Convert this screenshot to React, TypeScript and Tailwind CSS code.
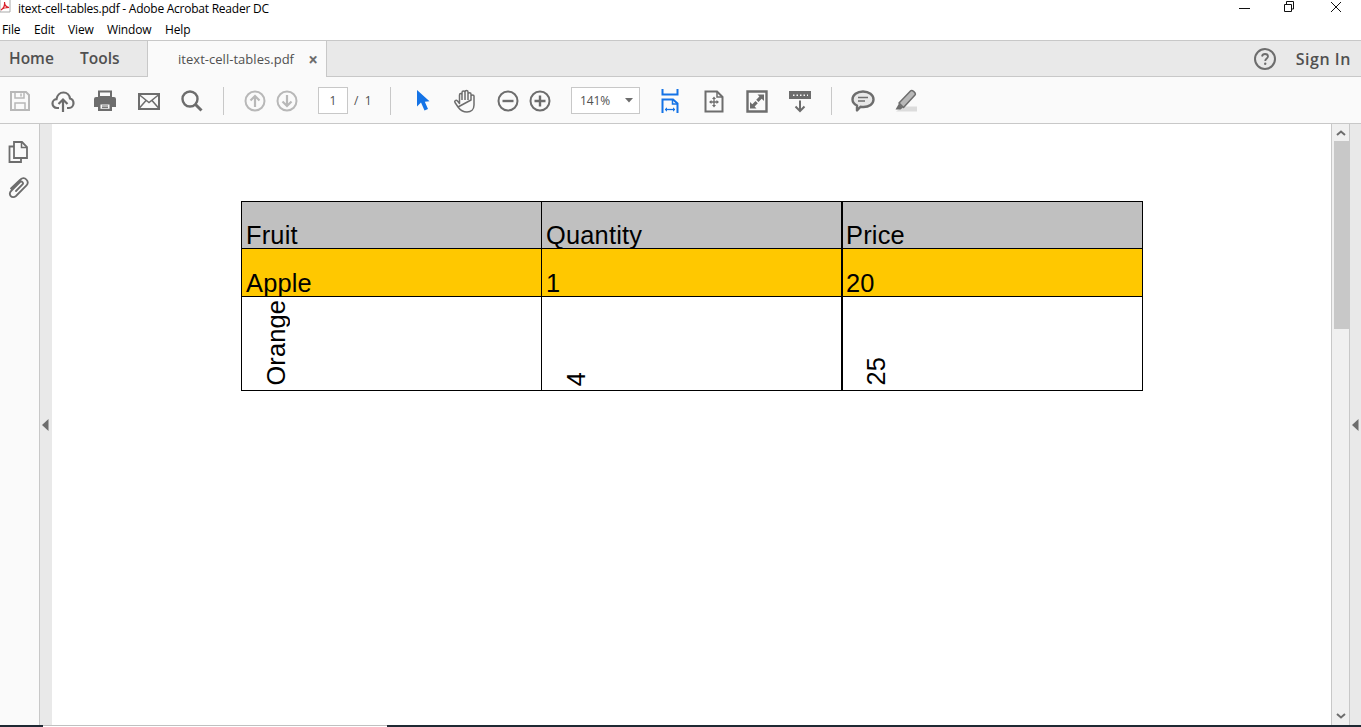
import React from "react";

const G = "#6d6d6d";
const L = "#b8b8b8";
const B = "#1473e6";

function Ic({ w = 24, h = 24, ml, children }: { w?: number; h?: number; ml: string; children: React.ReactNode }) {
  return (
    <svg width={w} height={h} viewBox={`0 0 ${w} ${h}`} fill="none" className={`shrink-0 ${ml}`}>
      {children}
    </svg>
  );
}

function Cell({ text, cls, rotated }: { text: string; cls: string; rotated?: boolean }) {
  if (rotated) {
    return (
      <div className={`flex items-end pb-[4px] ${cls}`}>
        <span className="[writing-mode:vertical-rl] rotate-180 font-['Liberation_Sans',sans-serif] text-[25.4px] leading-[28px] tracking-[0.15px] text-black">{text}</span>
      </div>
    );
  }
  return (
    <div className={`flex items-end ${cls}`}>
      <span className="font-['Liberation_Sans',sans-serif] text-[25.4px] leading-[28px] tracking-[0.2px] translate-y-[1px] text-black">{text}</span>
    </div>
  );
}

export default function App() {
  return (
    <div className="flex h-[727px] w-[1361px] flex-col overflow-hidden bg-white font-['Open_Sans',sans-serif] text-black">
      {/* Title bar */}
      <div className="flex h-[20px] shrink-0 items-center bg-white">
        <svg width="14" height="16" viewBox="0 0 14 16" fill="none" className="mt-[-6px] shrink-0">
          <path d="M0 0H10V13H0Z" fill="#fff" stroke="#a9a9a9" />
          <path d="M1 11C4 9 5 6 4.500 3C4.500 6 6 8 9 8.500C6 8.500 3 9 1 11Z" stroke="#d8202a" strokeWidth="1.200" />
        </svg>
        <span className="ml-[4px] mt-[-3px] text-[12px] leading-[16px] tracking-[-0.24px]">itext-cell-tables.pdf - Adobe Acrobat Reader DC</span>
        <div className="ml-auto flex items-center">
          <svg width="12" height="12" viewBox="0 0 12 12" className="mr-[33px] mt-[-6px]"><path d="M0 7.500H11" stroke="#111" /></svg>
          <svg width="12" height="12" viewBox="0 0 12 12" fill="none" className="mr-[34px] mt-[-6px]"><path d="M0.500 3.500H7.500V10.500H0.500ZM2.500 3.500V0.500H9.500V8H7.500" stroke="#111" /></svg>
          <svg width="12" height="12" viewBox="0 0 12 12" className="mr-[19px] mt-[-6px]"><path d="M1 1L11 11M11 1L1 11" stroke="#111" /></svg>
        </div>
      </div>

      {/* Menu */}
      <div className="flex h-[20px] shrink-0 items-center bg-white pl-[2px] text-[12px] leading-[16px] tracking-[-0.15px]">
        <span className="w-[32px]">File</span>
        <span className="w-[34px]">Edit</span>
        <span className="w-[39px]">View</span>
        <span className="w-[58px]">Window</span>
        <span>Help</span>
      </div>

      {/* Tabs */}
      <div className="flex h-[37px] shrink-0 items-stretch border-y border-[#c8c8c8] bg-[#e9e9e9]">
        <div className="flex w-[147px] items-center pl-[9px] text-[15.500px] font-semibold text-[#505050]">
          <span className="w-[71px]">Home</span>
          <span>Tools</span>
        </div>
        <div className="mb-[-1px] flex w-[180px] items-center border-x border-[#c8c8c8] bg-[#fafafa] pl-[30px] text-[13px] text-[#505050]">
          <span className="translate-y-[1px] tracking-[0.03px]">itext-cell-tables.pdf</span>
          <span className="ml-auto mr-[8px] text-[17px] font-bold leading-none text-[#6d6d6d]">×</span>
        </div>
        <div className="ml-auto flex items-center pr-[10px]">
          <svg width="24" height="24" viewBox="0 0 24 24" fill="none" className="mr-[19px]">
            <circle cx="12" cy="12" r="10" stroke={G} strokeWidth="2" />
            <path d="M9 9.500C9.300 7.800 10.500 7 12 7C13.800 7 15 8 15 9.500C15 11.500 12.200 11.500 12.200 14" stroke={G} strokeWidth="1.800" />
            <circle cx="12.200" cy="16.800" r="1.200" fill={G} />
          </svg>
          <span className="text-[16px] font-semibold tracking-[0.55px] text-[#505050]">Sign In</span>
        </div>
      </div>

      {/* Toolbar */}
      <div className="flex h-[47px] shrink-0 items-center border-b border-[#c8c8c8] bg-[#fafafa] pt-[1px]">
        {/* save */}
        <Ic ml="ml-[8px]">
          <path d="M3 3H18L21 6V21H3Z" stroke={L} strokeWidth="2" />
          <path d="M7 3V9H16V3M13 4.500V7.500M7 21V14H17V21" stroke={L} strokeWidth="1.500" />
        </Ic>
        {/* upload */}
        <Ic ml="ml-[19px]">
          <path d="M8 19H6C3 19 1.500 16.500 1.500 14.500C1.500 12 3.500 10.200 5.500 10.200C6 6.500 8.800 3.500 12.500 3.500C16 3.500 18.500 6.200 19 9.500C21 10 22.500 12 22.500 14.200C22.500 16.800 20.500 19 18 19H16" stroke={G} strokeWidth="2.200" />
          <path d="M12 23V11M7.500 15L12 10.500L16.500 15" stroke={G} strokeWidth="2.200" />
        </Ic>
        {/* print */}
        <Ic ml="ml-[18px]">
          <path d="M6 2.500H18V8H6Z" stroke={G} strokeWidth="2" />
          <path d="M3 8H21A2 2 0 0 1 23 10V18H19V14H5V18H1V10A2 2 0 0 1 3 8Z" fill={G} />
          <path d="M5 13H19V22H5Z" fill={G} />
          <path d="M7.500 15.500H16.500V19.800H7.500Z" fill="#fafafa" />
          <path d="M9 17H15M9 18.600H15" stroke={G} />
        </Ic>
        {/* mail */}
        <Ic ml="ml-[20px]">
          <path d="M2 5H22V20H2Z" stroke={G} strokeWidth="2" />
          <path d="M2 5.500L12 13.500L22 5.500M2 19.500L9 11.500M22 19.500L15 11.500" stroke={G} strokeWidth="1.500" />
        </Ic>
        {/* search */}
        <Ic ml="ml-[19px]">
          <circle cx="10" cy="10" r="7.500" stroke={G} strokeWidth="2.400" />
          <path d="M15.500 15.500L21.500 21.500" stroke={G} strokeWidth="3" />
        </Ic>
        <div className="ml-[19px] h-[28px] w-px bg-[#c8c8c8]" />
        {/* up */}
        <Ic ml="ml-[19px]">
          <circle cx="12" cy="12" r="9.500" stroke={L} strokeWidth="2" />
          <path d="M12 18V7M7.500 11.500L12 7L16.500 11.500" stroke={L} strokeWidth="2.200" />
        </Ic>
        {/* down */}
        <Ic ml="ml-[8px]">
          <circle cx="12" cy="12" r="9.500" stroke={L} strokeWidth="2" />
          <path d="M12 6V17M7.500 12.500L12 17L16.500 12.500" stroke={L} strokeWidth="2.200" />
        </Ic>
        <div className="ml-[19px] flex h-[27px] w-[30px] items-center justify-center border border-[#c8c8c8] bg-white text-[12px] text-[#505050]">1</div>
        <span className="ml-[6px] w-[17px] whitespace-pre text-[12px] text-[#505050]">/  1</span>
        <div className="ml-[19px] h-[28px] w-px bg-[#c8c8c8]" />
        {/* cursor */}
        <Ic ml="ml-[19px]">
          <path d="M7 1V17.500L11 13.500L14.500 21.500L18 20L14.800 12.800L19.500 12.300Z" fill={B} />
        </Ic>
        {/* hand */}
        <Ic ml="ml-[19px]" h={26}>
          <path d="M5 19L2 14.500C1 13 3 11.500 4.500 13L6.500 15.500V7C6.500 5 9 5 9 7V12M9 12V4.500C9 2.500 12 2.500 12 4.500V12M12 12V4C12 2 15 2 15 4V12M15 12V6C15 4.200 18 4.200 18 6V12M18 12V8C18 6.500 21 6.500 21 8V17C21 21.500 18 24 14 24C10 24 7.500 22.500 5 19Z" stroke={G} strokeWidth="1.500" strokeLinejoin="round" />
        </Ic>
        {/* minus */}
        <Ic ml="ml-[19px]">
          <circle cx="12" cy="12" r="9.500" stroke={G} strokeWidth="2" />
          <path d="M6.500 12H17.500" stroke={G} strokeWidth="2.400" />
        </Ic>
        {/* plus */}
        <Ic ml="ml-[8px]">
          <circle cx="12" cy="12" r="9.500" stroke={G} strokeWidth="2" />
          <path d="M6.500 12H17.500M12 6.500V17.500" stroke={G} strokeWidth="2.400" />
        </Ic>
        <div className="ml-[19px] flex h-[27px] w-[69px] items-center border border-[#c8c8c8] bg-white pl-[8px] text-[12px] tracking-[-0.15px] text-[#505050]">
          <span>141%</span>
          <svg width="8" height="5" viewBox="0 0 8 5" className="ml-auto mr-[6px]"><path d="M0 0H8L4 4.500Z" fill={G} /></svg>
        </div>
        {/* fit width */}
        <Ic ml="ml-[18px]" h={26}>
          <path d="M4.500 1V6.500H19.500V1" stroke={B} strokeWidth="2" />
          <path d="M4.500 25V11.500H15L19.500 15.500V25" stroke={B} strokeWidth="2" />
          <path d="M14.500 11.500V16H19.500" stroke={B} strokeWidth="1.500" />
          <path d="M7 21.500H17" stroke={B} strokeWidth="1.300" />
          <path d="M9 19.300L6.800 21.500L9 23.700ZM15 19.300L17.200 21.500L15 23.700Z" fill={B} />
        </Ic>
        {/* fit page */}
        <Ic ml="ml-[20px]">
          <path d="M3.500 2.500H15L20.500 8V22.500H3.500Z" stroke={G} strokeWidth="2" />
          <path d="M15 2.500V8H20.500" stroke={G} strokeWidth="1.500" />
          <path d="M12 9V17M8 13H16" stroke={G} strokeWidth="1.300" />
          <path d="M10 10L12 7.500L14 10ZM10 16L12 18.500L14 16ZM9.500 11L7 13L9.500 15ZM14.500 11L17 13L14.500 15Z" fill={G} />
        </Ic>
        {/* full screen */}
        <Ic ml="ml-[19px]">
          <path d="M2.500 2.500H21.500V22.500H2.500Z" stroke={G} strokeWidth="2.400" />
          <path d="M12.500 5.500H19V12L16.700 9.800L13.500 13L11.200 10.700L14.400 7.500Z" fill={G} />
          <path d="M11.500 19.500H5V13L7.300 15.200L10.500 12L12.800 14.300L9.600 17.500Z" fill={G} />
        </Ic>
        {/* read mode */}
        <Ic ml="ml-[19px]">
          <path d="M1 2H23V10H1Z" fill={G} />
          <path d="M5 5.500H6.500V7H5ZM8.500 5.500H10V7H8.500ZM12 5.500H13.500V7H12ZM15.500 5.500H17V7H15.500ZM19 5.500H20V7H19Z" fill="#fafafa" />
          <path d="M12 11.500V22M7.500 17.500L12 22L16.500 17.500" stroke={G} strokeWidth="2" />
        </Ic>
        <div className="ml-[19px] h-[28px] w-px bg-[#c8c8c8]" />
        {/* comment */}
        <Ic ml="ml-[19px]">
          <path d="M12 2.500C18 2.500 22.500 6 22.500 10.500C22.500 15 18 18 12.500 18C11.500 18 10.500 18 9.500 17.800L6 21.500V16.500C3 15 1.500 13 1.500 10.500C1.500 6 6 2.500 12 2.500Z" stroke={G} strokeWidth="2.400" strokeLinejoin="round" fill="#e8e8e8" />
          <path d="M7 8.500H17M7 12H14" stroke={G} strokeWidth="1.300" />
        </Ic>
        {/* highlight */}
        <Ic ml="ml-[19px]">
          <path d="M2 22.500H23V17.500H9Z" fill="#dcdcdc" />
          <path d="M5 14L16.500 2C18 0.500 22.500 4 21 6L9.500 18.500Z" stroke={G} strokeWidth="1.500" strokeLinejoin="round" fill={L} />
          <path d="M5 14.500L9 18.500L6.500 20.500H1.500Z" fill={G} />
        </Ic>
      </div>

      {/* Main */}
      <div className="flex min-h-0 flex-1">
        <div className="flex w-[40px] shrink-0 flex-col items-center border-r border-[#c8c8c8] bg-[#fafafa] pr-[3px] pt-[16px]">
          <svg width="24" height="24" viewBox="0 0 24 24" fill="none">
            <path d="M8 6.500H3.500V22H15V18" stroke={G} strokeWidth="1.800" />
            <path d="M8 2H16L21 7V18H8Z" stroke={G} strokeWidth="1.800" />
            <path d="M15.500 2V7.500H21" stroke={G} strokeWidth="1.500" />
          </svg>
          <svg width="24" height="24" viewBox="0 0 24 24" fill="none" className="mt-[12px]">
            <path d="M10 15L16.500 8.500C18 6.800 15.700 4.500 14 6.200L5.500 14.500C1.500 18.500 6 23.500 10 20L20.500 9.500C24 5.500 18.500 -0.500 14.500 3.500L5 12.500" stroke={G} strokeWidth="1.800" strokeLinecap="round" />
          </svg>
        </div>
        <div className="flex w-[12px] shrink-0 items-center justify-center bg-[#e9e9e9]">
          <svg width="7" height="12" viewBox="0 0 7 12" className="mr-[2px]"><path d="M6.500 0V12L0 6Z" fill={G} /></svg>
        </div>

        {/* Document */}
        <div className="min-w-0 flex-1 bg-white pl-[189px] pt-[77px]">
          <div className="grid w-[902px] grid-cols-[300px_301px_299px] grid-rows-[47px_48px_93px] border border-black bg-white">
            <Cell text="Fruit" cls="border-b border-r border-black bg-[#c0c0c0] pl-[4px]" />
            <Cell text="Quantity" cls="border-b border-r-2 border-black bg-[#c0c0c0] pl-[4px]" />
            <Cell text="Price" cls="border-b border-black bg-[#c0c0c0] pl-[3px]" />
            <Cell text="Apple" cls="border-b border-r border-black bg-[#ffc800] pl-[4px]" />
            <Cell text="1" cls="border-b border-r-2 border-black bg-[#ffc800] pl-[4px]" />
            <Cell text="20" cls="border-b border-black bg-[#ffc800] pl-[3px]" />
            <Cell rotated text="Orange" cls="border-r border-black pl-[20px]" />
            <Cell rotated text="4" cls="border-r-2 border-black pl-[20px]" />
            <Cell rotated text="25" cls="pl-[19px]" />
          </div>
        </div>

        {/* Scrollbar */}
        <div className="flex w-[18px] shrink-0 flex-col items-center border-l border-[#c8c8c8] bg-[#f0f0f0] pl-px">
          <svg width="10" height="6" viewBox="0 0 10 6" fill="none" className="mt-[6px] shrink-0"><path d="M1 5L5 1.500L9 5" stroke={G} strokeWidth="2" /></svg>
          <div className="mt-[5px] h-[188px] w-[15px] bg-[#c8c8c8]" />
          <svg width="10" height="6" viewBox="0 0 10 6" fill="none" className="mb-[6px] mt-auto shrink-0"><path d="M1 1L5 4.500L9 1" stroke={G} strokeWidth="2" /></svg>
        </div>
        <div className="flex w-[12px] shrink-0 items-center justify-center border-l border-[#c8c8c8] bg-[#e9e9e9]">
          <svg width="7" height="12" viewBox="0 0 7 12"><path d="M6.500 0V12L0 6Z" fill={G} /></svg>
        </div>
      </div>

      {/* Bottom edge */}
      <div className="flex h-[2px] shrink-0">
        <div className="w-[43px] bg-[#1f2933]" />
        <div className="w-[344px] border-t border-[#c0c0c0] bg-white" />
        <div className="flex-1 bg-[#1f2933]" />
      </div>
    </div>
  );
}
